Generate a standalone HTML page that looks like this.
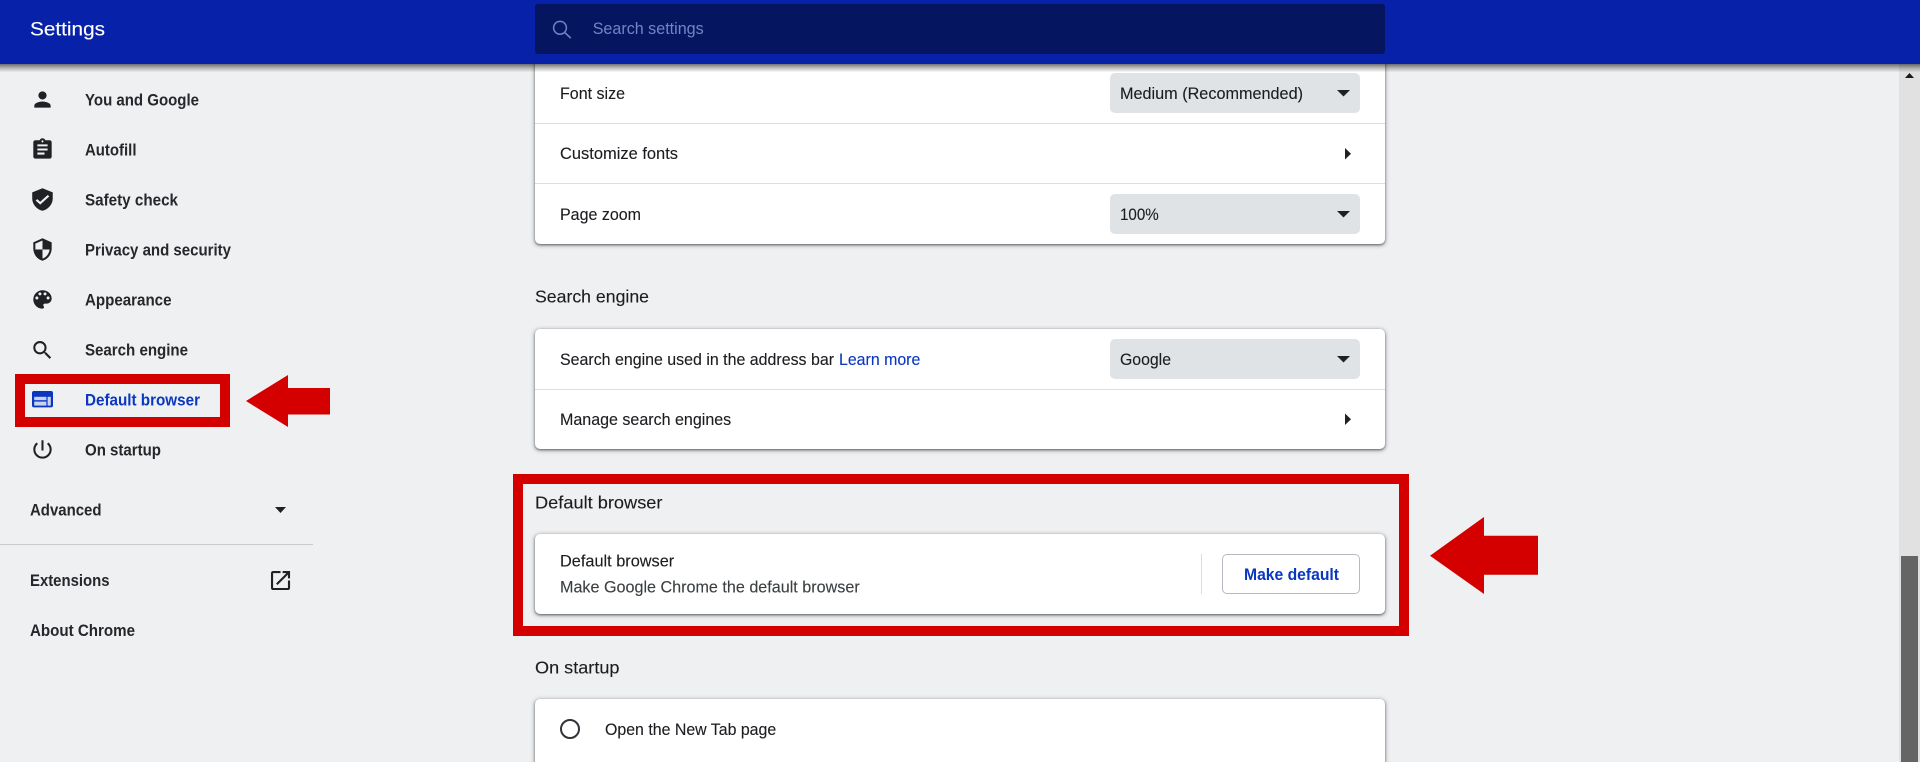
<!DOCTYPE html>
<html lang="en">
<head>
<meta charset="utf-8">
<title>Settings</title>
<style>
html,body{margin:0;padding:0;width:1920px;height:762px;overflow:hidden;background:#eff0f2}
body{position:relative;font-family:"Liberation Sans",sans-serif}
.a{position:absolute;box-sizing:border-box}
.header{left:0;top:0;width:1920px;height:64px;background:#0722a9}
.hshadow{left:0;top:64px;width:1920px;height:8px;background:linear-gradient(rgba(0,0,0,.55),rgba(0,0,0,.28) 45%,rgba(0,0,0,.02))}
.search{left:535px;top:4px;width:850px;height:50px;background:#051560;border-radius:3px}
.card{left:535px;width:850px;background:#fff;border-radius:5px;box-shadow:0 1px 2px rgba(60,64,67,.7),0 1px 4px 1px rgba(60,64,67,.3)}
.sep{left:535px;width:850px;height:1px;background:#dcdde0}
.sel{left:1110px;width:250px;height:40px;background:#e0e3e6;border-radius:5px}
.scroll{left:1899px;top:64px;width:21px;height:698px;background:#e1e1e1}
.thumb{left:1901px;top:556px;width:17px;height:206px;background:#656565}
.btn{left:1222px;top:554px;width:138px;height:40px;border:1px solid #b8bac2;border-radius:5px;background:#fff}
.vsep{left:1201px;top:554px;width:1px;height:40px;background:#dcdde0}
.hr{left:0;top:544px;width:313px;height:1px;background:#c9cacc}
.redbox{border:10px solid #d40000}
svg.layer{position:absolute;left:0;top:0;width:1920px;height:762px}
text{font-family:"Liberation Sans",sans-serif;font-size:16.4px;fill:#1c1d20;stroke:#1c1d20;stroke-width:.12px}
.m{font-weight:bold;fill:#26272b;stroke:none}
.h{font-size:17.6px}
.w{fill:#fff;stroke:#fff;font-size:19.8px}
.ph{fill:#7085c6;stroke:none}
.b{font-weight:bold;fill:#0a37c0;stroke:none}
.l{fill:#0a37c0;stroke:#0a37c0}
.g{fill:#3c4043;stroke:#3c4043}
</style>
</head>
<body>
<div class="a scroll"></div>
<div class="a thumb"></div>

<div class="a card" style="top:40px;height:204px"></div>
<div class="a sep" style="top:123px"></div>
<div class="a sep" style="top:183px"></div>
<div class="a sel" style="top:73px"></div>
<div class="a sel" style="top:194px"></div>

<div class="a card" style="top:329px;height:120px"></div>
<div class="a sep" style="top:389px"></div>
<div class="a sel" style="top:339px"></div>

<div class="a card" style="top:534px;height:80px"></div>
<div class="a vsep"></div>
<div class="a btn"></div>

<div class="a card" style="top:699px;height:100px"></div>

<div class="a hr"></div>

<div class="a redbox" style="left:15px;top:374px;width:215px;height:53px"></div>
<div class="a redbox" style="left:513px;top:474px;width:896px;height:162px"></div>

<div class="a hshadow"></div>
<div class="a header"></div>
<div class="a search"></div>

<svg class="layer" viewBox="0 0 1920 762" xmlns="http://www.w3.org/2000/svg">
  <!-- arrows -->
  <polygon fill="#d40000" points="246,401 288,375 288,388 330,388 330,414.5 288,414.5 288,427"/>
  <polygon fill="#d40000" points="1430,555.7 1484,517 1484,535.7 1538,535.7 1538,574.7 1484,574.7 1484,594"/>

  <!-- scrollbar arrow -->
  <polygon fill="#1a1a1a" points="1905,78 1914,78 1909.5,73"/>

  <!-- sidebar icons -->
  <g fill="#202124">
    <g transform="translate(30.25 87.25) scale(1.02)"><path d="M12 12c2.21 0 4-1.79 4-4s-1.79-4-4-4-4 1.79-4 4 1.79 4 4 4zm0 2c-2.67 0-8 1.34-8 4v2h16v-2c0-2.66-5.33-4-8-4z"/></g>
    <g transform="translate(30.25 137.25) scale(1.02)"><path d="M19 3h-4.18C14.4 1.84 13.3 1 12 1c-1.3 0-2.4.84-2.82 2H5c-1.1 0-2 .9-2 2v14c0 1.1.9 2 2 2h14c1.1 0 2-.9 2-2V5c0-1.1-.9-2-2-2zm-7 0c.55 0 1 .45 1 1s-.45 1-1 1-1-.45-1-1 .45-1 1-1zm2 14H7v-2h7v2zm3-4H7v-2h10v2zm0-4H7V7h10v2z"/></g>
    <g transform="translate(28.8 187.25) scale(1.14 1.02)"><path d="M12 1L3 5v6c0 5.55 3.84 10.74 9 12 5.16-1.26 9-6.45 9-12V5l-9-4zm-2 16l-4-4 1.41-1.41L10 14.17l6.59-6.59L18 9l-8 8z"/></g>
    <g transform="translate(30.25 237.25) scale(1.02)"><path d="M12 1L3 5v6c0 5.55 3.84 10.74 9 12 5.16-1.26 9-6.45 9-12V5l-9-4zm0 10.99h7c-.53 4.12-3.28 7.79-7 8.94V12H5V6.3l7-3.11v8.8z"/></g>
    <g transform="translate(30.25 287.25) scale(1.02)"><path d="M12 3c-4.97 0-9 4.03-9 9s4.03 9 9 9c.83 0 1.5-.67 1.5-1.5 0-.39-.15-.74-.39-1.01-.23-.26-.38-.61-.38-.99 0-.83.67-1.5 1.5-1.5H16c2.76 0 5-2.24 5-5 0-4.42-4.03-8-9-8zm-5.5 9c-.83 0-1.5-.67-1.5-1.5S5.67 9 6.5 9 8 9.67 8 10.5 7.33 12 6.5 12zm3-4C8.67 8 8 7.33 8 6.5S8.67 5 9.5 5s1.5.67 1.5 1.5S10.33 8 9.5 8zm5 0c-.83 0-1.5-.67-1.5-1.5S13.67 5 14.5 5s1.5.67 1.5 1.5S15.33 8 14.5 8zm3 4c-.83 0-1.5-.67-1.5-1.5S16.67 9 17.5 9s1.5.67 1.5 1.5-.67 1.5-1.5 1.5z"/></g>
    <g transform="translate(30.25 338) scale(1.02)"><path d="M15.5 14h-.79l-.28-.27C15.41 12.59 16 11.11 16 9.5 16 5.91 13.09 3 9.5 3S3 5.91 3 9.5 5.91 16 9.5 16c1.61 0 3.09-.59 4.23-1.57l.27.28v.79l5 4.99L20.49 19l-4.99-5zm-6 0C7.01 14 5 11.99 5 9.5S7.01 5 9.5 5 14 7.01 14 9.5 11.99 14 9.5 14z"/></g>
    <g transform="translate(30.25 437.25) scale(1.02)"><path d="M13 3h-2v10h2V3zm4.83 2.17l-1.42 1.42C17.99 7.86 19 9.81 19 12c0 3.87-3.13 7-7 7s-7-3.13-7-7c0-2.19 1.01-4.14 2.58-5.42L6.17 5.17C4.23 6.82 3 9.26 3 12c0 4.97 4.03 9 9 9s9-4.03 9-9c0-2.74-1.23-5.18-3.17-6.83z"/></g>
    <g transform="translate(267.8 567.8) scale(1.06)"><path d="M19 19H5V5h7V3H5c-1.11 0-2 .9-2 2v14c0 1.1.89 2 2 2h14c1.1 0 2-.9 2-2v-7h-2v7zM14 3v2h3.59l-9.83 9.83 1.41 1.41L19 6.41V10h2V3h-7z"/></g>
    <polygon points="275,507 286,507 280.5,513"/>
  </g>
  <!-- default-browser icon: solid blue frame with pale panels -->
  <rect x="32" y="391" width="21" height="16.4" rx="2" fill="#0a37c0"/>
  <g fill="#c9d3f0">
    <rect x="34.2" y="396.8" width="12.2" height="3.4"/>
    <rect x="34.2" y="401.6" width="12.2" height="4"/>
    <rect x="47.6" y="396.8" width="3.2" height="8.8"/>
  </g>

  <!-- header search icon -->
  <circle cx="560" cy="27.8" r="6.4" fill="none" stroke="#7085c6" stroke-width="1.5"/>
  <path d="M564.8 32.6L570.8 38.2" fill="none" stroke="#7085c6" stroke-width="1.6"/>

  <!-- carets -->
  <g fill="#202124">
    <polygon points="1337,90 1350,90 1343.5,96.5"/>
    <polygon points="1337,211 1350,211 1343.5,217.5"/>
    <polygon points="1337,356 1350,356 1343.5,362.5"/>
    <polygon points="1345,148 1351,153.7 1345,159.5"/>
    <polygon points="1345,413.5 1351,419.3 1345,425"/>
  </g>

  <!-- radio -->
  <circle cx="570" cy="729" r="9" fill="none" stroke="#303337" stroke-width="2"/>

  <!-- header text -->
  <text class="w" x="30" y="35.5" textLength="75" lengthAdjust="spacingAndGlyphs">Settings</text>
  <text class="ph" x="592.7" y="34" textLength="111" lengthAdjust="spacingAndGlyphs">Search settings</text>

  <!-- sidebar text -->
  <text class="m" x="85" y="105.5" textLength="114" lengthAdjust="spacingAndGlyphs">You and Google</text>
  <text class="m" x="85" y="155.5" textLength="51.5" lengthAdjust="spacingAndGlyphs">Autofill</text>
  <text class="m" x="85" y="205.5" textLength="93" lengthAdjust="spacingAndGlyphs">Safety check</text>
  <text class="m" x="85" y="255.5" textLength="146" lengthAdjust="spacingAndGlyphs">Privacy and security</text>
  <text class="m" x="85" y="305.5" textLength="86.5" lengthAdjust="spacingAndGlyphs">Appearance</text>
  <text class="m" x="85" y="355.5" textLength="103" lengthAdjust="spacingAndGlyphs">Search engine</text>
  <text class="b" x="85" y="405.5" textLength="115" lengthAdjust="spacingAndGlyphs">Default browser</text>
  <text class="m" x="85" y="455.5" textLength="76" lengthAdjust="spacingAndGlyphs">On startup</text>
  <text class="m" x="30" y="515.5" textLength="71.5" lengthAdjust="spacingAndGlyphs">Advanced</text>
  <text class="m" x="30" y="586" textLength="79.5" lengthAdjust="spacingAndGlyphs">Extensions</text>
  <text class="m" x="30" y="636" textLength="105" lengthAdjust="spacingAndGlyphs">About Chrome</text>

  <!-- main text -->
  <text x="560" y="99" textLength="65" lengthAdjust="spacingAndGlyphs">Font size</text>
  <text x="1120" y="99" textLength="183" lengthAdjust="spacingAndGlyphs">Medium (Recommended)</text>
  <text x="560" y="159" textLength="118" lengthAdjust="spacingAndGlyphs">Customize fonts</text>
  <text x="560" y="220" textLength="81" lengthAdjust="spacingAndGlyphs">Page zoom</text>
  <text x="1120" y="220" textLength="38.7" lengthAdjust="spacingAndGlyphs">100%</text>

  <text class="h" x="535" y="302.7" textLength="114" lengthAdjust="spacingAndGlyphs">Search engine</text>
  <text x="560" y="365" textLength="274" lengthAdjust="spacingAndGlyphs">Search engine used in the address bar</text>
  <text class="l" x="839" y="365" textLength="81.3" lengthAdjust="spacingAndGlyphs">Learn more</text>
  <text x="1120" y="365" textLength="51" lengthAdjust="spacingAndGlyphs">Google</text>
  <text x="560" y="425" textLength="171.2" lengthAdjust="spacingAndGlyphs">Manage search engines</text>

  <text class="h" x="535" y="508.3" textLength="127.5" lengthAdjust="spacingAndGlyphs">Default browser</text>
  <text x="560" y="566.7" textLength="114.2" lengthAdjust="spacingAndGlyphs">Default browser</text>
  <text class="g" x="560" y="592.3" textLength="299.7" lengthAdjust="spacingAndGlyphs">Make Google Chrome the default browser</text>
  <text class="b" x="1244" y="580" textLength="95" lengthAdjust="spacingAndGlyphs">Make default</text>

  <text class="h" x="535" y="673.3" textLength="84.5" lengthAdjust="spacingAndGlyphs">On startup</text>
  <text x="605" y="735" textLength="171.2" lengthAdjust="spacingAndGlyphs">Open the New Tab page</text>
</svg>
</body>
</html>
